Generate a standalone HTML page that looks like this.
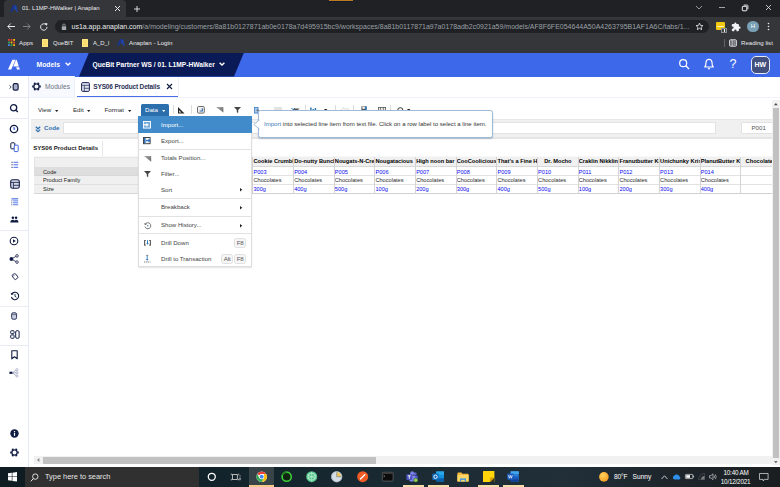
<!DOCTYPE html>
<html><head><meta charset="utf-8">
<style>
*{box-sizing:border-box;margin:0;padding:0}
html,body{width:780px;height:487px;overflow:hidden;background:#fff;font-family:"Liberation Sans",sans-serif;}
.abs{position:absolute}
#root{position:relative;width:780px;height:487px;overflow:hidden;background:#fff}
svg{position:absolute;overflow:visible}
/* chrome */
#tabbar{left:0;top:0;width:780px;height:17px;background:#202124}
#tab{left:4px;top:0;width:122px;height:17px;background:#35363a;border-radius:4px 4px 0 0}
#addr{left:0;top:17px;width:780px;height:18px;background:#35363a}
#pill{left:55px;top:19.6px;width:654px;height:13.9px;border-radius:7px;background:#202124}
#bm{left:0;top:35px;width:780px;height:17.5px;background:#35363a}
.ct{color:#e8eaed;font-size:6.4px;white-space:nowrap;line-height:8px}
/* app header */
#hdr{left:0;top:52.5px;width:780px;height:24px;background:#3e68ea}
#navy{left:79px;top:52.5px;width:165px;height:24px;background:#0a1a56;clip-path:polygon(10px 0,100% 0,155px 100%,0 100%)}
.ht{color:#fff;font-size:7px;font-weight:bold;white-space:nowrap;line-height:9px}
/* tabs row */
#tabs{left:0;top:76.5px;width:780px;height:21.4px;background:#fff;border-bottom:1.5px solid #f0f2fb}
#side{left:0;top:76px;width:28.5px;height:391px;background:#fff;border-right:1px solid #e4e8f7}
.ss{left:0;width:28px;height:1px;background:#e9ecf5}
.tt{font-size:6.6px;white-space:nowrap;line-height:8px;font-weight:bold}
/* toolbar */
.tb{font-size:6.15px;color:#2b2b2b;white-space:nowrap;line-height:8px}
.car{width:0;height:0;border-left:1.6px solid transparent;border-right:1.6px solid transparent;border-top:1.9px solid #222;margin-left:0.4px}
/* grid */
.g{font-size:5.6px;white-space:nowrap;line-height:8.7px;overflow:hidden}
.rh{left:34px;width:218.5px;border-bottom:1px solid #e0e0e0;padding-left:9px;color:#222}
#cols{position:absolute;left:0;top:0;width:772px;height:200px;overflow:hidden}
.col{top:156.5px;width:40.66px;height:37px;border-left:1px solid #d4d4d4}
.col div{padding-left:0.1px;overflow:hidden;border-bottom:1px solid #e2e2e2;color:#0a0af0}
.col div.h{height:10.5px;line-height:8px;padding-top:0.5px;background:#f0f0f0;color:#000;font-weight:bold;border-bottom:1px solid #d8d8d8;font-size:5.66px}
.col div.r1{height:9px;line-height:9px;padding-top:0.7px}
.col div.r2{height:9px;line-height:8.4px;padding-top:0}
.col div.r3{height:8.5px;line-height:7.4px;padding-top:1px;border-bottom:1px solid #d0d0d0}
.col div.f{color:#2a2a2a}
/* menu */
#menu{left:137.8px;top:116px;width:114.2px;height:151px;background:#fff;border:1px solid #dedede;box-shadow:0 0.5px 1.2px rgba(0,0,0,.12)}
.mi{left:161px;font-size:6.1px;color:#444;white-space:nowrap;line-height:8px}
.ms{left:138.5px;width:113px;height:1px;background:#e2e2e2}
.key{height:10.2px;border:1px solid #e0e0e0;border-radius:2.5px;background:#f6f6f6;font-size:6.1px;line-height:8.4px;color:#555;text-align:center}
.sub{width:0;height:0;border-top:1.7px solid transparent;border-bottom:1.7px solid transparent;border-left:2.2px solid #222;left:240px}
/* taskbar */
#task{left:0;top:467px;width:780px;height:20px;background:linear-gradient(90deg,#12222a 25%,#182830 45%,#212f39 72%,#1e262c 85%,#1a1e21 100%)}
.tk{color:#fff;font-size:6.1px;white-space:nowrap;line-height:8px}
</style></head><body><div id="root">

<!-- ===== Chrome ===== -->
<div id="tabbar" class="abs"></div>
<div id="tab" class="abs"></div>
<svg style="left:10.1px;top:5.1px" width="8.2" height="6.7" viewBox="8 59.7 11.9 9.8"><path d="M8 69.5H11.3L15.4 59.7H12.4Z" fill="#17348f"/><path d="M15.9 59.7H16.7L18.85 66.4H13.3Z" fill="#1d44b8"/><path d="M16.2 67.3H19.15L19.85 69.5H16.95Z" fill="#1d44b8"/></svg>
<div class="abs ct" style="left:22px;top:4px;font-size:6.05px">01. L1MP-HWalker | Anaplan</div>
<svg style="left:114px;top:5px" width="7" height="7" viewBox="0 0 7 7"><path d="M1 1L6 6M6 1L1 6" stroke="#e8eaed" stroke-width="1" fill="none"/></svg>
<svg style="left:133px;top:4.5px" width="8" height="8" viewBox="0 0 8 8"><path d="M4 1V7M1 4H7" stroke="#e8eaed" stroke-width="0.9" fill="none"/></svg>
<svg style="left:695px;top:5px" width="8" height="5" viewBox="0 0 8 5"><path d="M1 1L4 4L7 1" stroke="#ccc" stroke-width="0.7" fill="none"/></svg>
<svg style="left:718px;top:5px" width="8" height="5" viewBox="0 0 8 5"><path d="M1 2.5H7" stroke="#ddd" stroke-width="0.7"/></svg>
<svg style="left:741px;top:4px" width="8" height="8" viewBox="0 0 8 8"><rect x="1.3" y="2.3" width="4.5" height="4.5" rx="0.7" stroke="#f1f1f1" stroke-width="1" fill="none"/><path d="M2.7 1.1H6.3Q6.9 1.1 6.9 1.7V5.3" stroke="#f1f1f1" stroke-width="0.9" fill="none"/></svg>
<svg style="left:765px;top:4.1px" width="7" height="7" viewBox="0 0 7 7"><path d="M1 1L6 6M6 1L1 6" stroke="#eee" stroke-width="0.8" fill="none"/></svg>

<div class="abs" style="left:328.5px;top:0;width:24.5px;height:1.7px;background:#0c1730"></div><div class="abs" style="left:328.5px;top:0;width:24.5px;height:1px;background:#c47a1c"></div>
<div id="addr" class="abs"></div>
<svg style="left:6px;top:22px" width="10" height="9" viewBox="0 0 10 9"><path d="M9 4.5H2M4.8 1.5L1.8 4.5L4.8 7.5" stroke="#e8eaed" stroke-width="1" fill="none"/></svg>
<svg style="left:22px;top:22px" width="10" height="9" viewBox="0 0 10 9"><path d="M1 4.5H8M5.2 1.5L8.2 4.5L5.2 7.5" stroke="#7d8085" stroke-width="1" fill="none"/></svg>
<svg style="left:39px;top:21.5px" width="10" height="10" viewBox="0 0 10 10"><path d="M8 5A3.2 3.2 0 1 1 6.9 2.6" stroke="#e8eaed" stroke-width="1" fill="none"/><path d="M5.6 1L8.4 1.2L8 4Z" fill="#e8eaed"/></svg>
<div id="pill" class="abs"></div>
<svg style="left:61px;top:23px" width="6" height="8" viewBox="0 0 6 8"><rect x="0.8" y="3.3" width="4.4" height="3.7" rx="0.6" fill="#a4a9ae"/><path d="M1.8 3.5V2.2A1.2 1.2 0 0 1 4.2 2.2V3.5" stroke="#a4a9ae" stroke-width="0.8" fill="none"/></svg>
<div class="abs ct" style="left:71.5px;top:22.5px;font-size:7px">us1a.app.anaplan.com<span style="color:#9aa0a6">/a/modeling/customers/8a81b0127871ab0e0178a7d495915bc9/workspaces/8a81b0117871a97a0178adb2c0921a59/models/AF8F6FE054644A50A4263795B1AF1A6C/tabs/1...</span></div>
<svg style="left:695px;top:21.8px" width="9" height="9" viewBox="0 0 24 24"><path d="M12 3l2.7 6 6.5.6-4.9 4.3 1.5 6.4L12 16.9 6.2 20.3l1.5-6.4L2.8 9.6l6.5-.6z" stroke="#e8eaed" stroke-width="2.2" fill="none" stroke-linejoin="round"/></svg>
<div class="abs" style="left:716px;top:22.3px;width:8.5px;height:8.2px;background:#f2c811;border-radius:1px"></div>
<div class="abs" style="left:717px;top:25.6px;width:6.5px;height:1.2px;background:#fff3b0"></div>
<div class="abs" style="left:721.4px;top:27.6px;width:5.3px;height:5.8px;background:#45474b;border:0.6px solid #8a8d91"></div><div class="abs" style="left:723.7px;top:28.8px;width:0.9px;height:3.4px;background:#f0f0f0"></div>
<svg style="left:731px;top:21.5px" width="10" height="10" viewBox="0 0 24 24"><path d="M20.5 11H19V7a2 2 0 0 0-2-2h-4V3.5a2.5 2.5 0 0 0-5 0V5H4a2 2 0 0 0-2 2v3.8h1.5a2.7 2.7 0 0 1 0 5.4H2V20a2 2 0 0 0 2 2h3.8v-1.5a2.7 2.7 0 0 1 5.4 0V22H17a2 2 0 0 0 2-2v-4h1.5a2.5 2.5 0 0 0 0-5z" fill="#f1f3f4"/></svg>
<div class="abs" style="left:747.2px;top:20.8px;width:11.4px;height:11.4px;border-radius:6px;background:#789fb3;color:#fff;font-size:6px;line-height:11.4px;text-align:center">H</div>
<svg style="left:767.2px;top:21.9px" width="3" height="9" viewBox="0 0 3 9"><circle cx="1.5" cy="1.5" r="0.8" fill="#e8eaed"/><circle cx="1.5" cy="4.5" r="0.8" fill="#e8eaed"/><circle cx="1.5" cy="7.5" r="0.8" fill="#e8eaed"/></svg>

<div id="bm" class="abs"></div>
<svg style="left:8px;top:39px" width="7" height="7" viewBox="0 0 7 7"><rect x="0" y="0" width="1.8" height="1.8" fill="#ea4335"/><rect x="2.6" y="0" width="1.8" height="1.8" fill="#ea4335"/><rect x="5.2" y="0" width="1.8" height="1.8" fill="#fbbc04"/><rect x="0" y="2.6" width="1.8" height="1.8" fill="#34a853"/><rect x="2.6" y="2.6" width="1.8" height="1.8" fill="#fbbc04"/><rect x="5.2" y="2.6" width="1.8" height="1.8" fill="#ea4335"/><rect x="0" y="5.2" width="1.8" height="1.8" fill="#4285f4"/><rect x="2.6" y="5.2" width="1.8" height="1.8" fill="#34a853"/><rect x="5.2" y="5.2" width="1.8" height="1.8" fill="#fbbc04"/></svg>
<div class="abs ct" style="left:19px;top:39px;font-size:6.2px">Apps</div>
<div class="abs" style="left:41.8px;top:39px;width:6.4px;height:7.8px;background:#f8dc72;border:0.8px solid #ffe97e;border-radius:0.6px"></div>
<div class="abs ct" style="left:53px;top:39px;font-size:5.9px">QueBIT</div>
<div class="abs" style="left:81.8px;top:39px;width:6.4px;height:7.8px;background:#f8dc72;border:0.8px solid #ffe97e;border-radius:0.6px"></div>
<div class="abs ct" style="left:93px;top:39px;font-size:5.9px">A_D_I</div>
<svg style="left:117px;top:39.3px" width="8" height="6.6" viewBox="8 59.7 11.9 9.8"><path d="M8 69.5H11.3L15.4 59.7H12.4Z" fill="#17348f"/><path d="M15.9 59.7H16.7L18.85 66.4H13.3Z" fill="#1d44b8"/><path d="M16.2 67.3H19.15L19.85 69.5H16.95Z" fill="#1d44b8"/></svg>
<div class="abs ct" style="left:129px;top:39px;font-size:6.2px">Anaplan - Login</div>
<div class="abs" style="left:724px;top:38.5px;width:0.6px;height:8.5px;background:#5f6368"></div>
<svg style="left:729px;top:38.5px" width="8" height="8" viewBox="0 0 8 8"><rect x="0.6" y="0.8" width="6.8" height="6.4" rx="0.8" stroke="#dadce0" stroke-width="1" fill="#5f6368"/><path d="M3.2 1V7" stroke="#dadce0" stroke-width="0.8"/><path d="M4.6 2.7H6.3M4.6 4H6.3M4.6 5.3H6.3" stroke="#dadce0" stroke-width="0.5"/></svg>
<div class="abs ct" style="left:741px;top:39px;font-size:6.1px">Reading list</div>

<!-- ===== App header ===== -->
<div id="hdr" class="abs"></div>
<div id="navy" class="abs"></div>
<svg style="left:0;top:0" width="30" height="80" viewBox="0 0 30 80"><path d="M8 69.5H11.3L15.4 59.7H12.4Z" fill="#fff"/><path d="M15.9 59.7H16.7L18.85 66.4H13.3Z" fill="#fff"/><path d="M16.2 67.3H19.15L19.85 69.5H16.95Z" fill="#fff"/></svg>
<div class="abs ht" style="left:36.5px;top:59.5px;font-size:6.8px">Models</div>
<svg style="left:65px;top:62px" width="6" height="4" viewBox="0 0 6 4"><path d="M0.6 0.7L3 3.1L5.4 0.7" stroke="#fff" stroke-width="1.35" fill="none"/></svg>
<div class="abs ht" style="left:92.5px;top:59.5px;font-size:6.65px">QueBit Partner WS / 01. L1MP-HWalker</div>
<svg style="left:219px;top:62px" width="6" height="4" viewBox="0 0 6 4"><path d="M0.6 0.7L3 3.1L5.4 0.7" stroke="#fff" stroke-width="1.35" fill="none"/></svg>
<svg style="left:678px;top:58px" width="12" height="12" viewBox="0 0 12 12"><circle cx="5.2" cy="5.2" r="3.5" stroke="#fff" stroke-width="1.2" fill="none"/><path d="M7.8 7.8L11 11" stroke="#fff" stroke-width="1.3"/></svg>
<svg style="left:703px;top:57.5px" width="12" height="12" viewBox="0 0 12 12"><path d="M1.7 9H10.3Q9 8 9 4.4A3 3 0 0 0 3 4.4Q3 8 1.7 9Z" stroke="#fff" stroke-width="1.2" fill="none" stroke-linejoin="round"/><path d="M4.9 10.7H7.1" stroke="#fff" stroke-width="1.2"/></svg>
<div class="abs" style="left:729px;top:57.5px;color:#fff;font-size:12.5px;line-height:13px;width:8px;text-align:center;margin-top:0.8px">?</div>
<div class="abs" style="left:751px;top:55.5px;width:18.5px;height:18px;border:1.2px solid #e8ecfa;border-radius:5px;background:#43507d;color:#fff;font-size:7px;font-weight:bold;line-height:16px;text-align:center">HW</div>

<!-- ===== Tabs row ===== -->
<div id="tabs" class="abs"></div>
<div id="side" class="abs"></div>
<div class="abs" style="left:28.5px;top:76px;width:46px;height:20.5px;background:#f8f9fe;border-right:1px solid #eceffa"></div>
<svg style="left:32.1px;top:81.8px" width="9" height="9" viewBox="0 0 9 9"><circle cx="4.5" cy="4.5" r="2.65" stroke="#111c44" stroke-width="1.30" fill="none"/><path d="M7.40 4.50L8.80 4.50M5.95 7.01L6.65 8.22M3.05 7.01L2.35 8.22M1.60 4.50L0.20 4.50M3.05 1.99L2.35 0.78M5.95 1.99L6.65 0.78" stroke="#111c44" stroke-width="1.8"/></svg>
<div class="abs tt" style="left:45px;top:83px;color:#6b7280;font-weight:normal">Modules</div>
<svg style="left:81px;top:81.5px" width="9" height="10" viewBox="0 0 9 10"><rect x="0.6" y="0.6" width="7.8" height="8.8" rx="1.2" stroke="#1b2450" stroke-width="1" fill="#dfe3f0"/><path d="M0.6 3.3H8.4M3.3 3.3V9.4M3.3 6.3H8.4" stroke="#1b2450" stroke-width="0.7"/></svg>
<div class="abs tt" style="left:93.3px;top:83px;color:#2a3156;font-size:6.5px;letter-spacing:-0.15px">SYS06 Product Details</div>
<svg style="left:165.5px;top:83px" width="7" height="7" viewBox="0 0 7 7"><path d="M1 1L6 6M6 1L1 6" stroke="#111c44" stroke-width="1.1" fill="none"/></svg>
<div class="abs" style="left:177.5px;top:77px;width:1px;height:19px;background:#eef0fa"></div>
<div class="abs" style="left:77px;top:95.8px;width:101px;height:1.5px;background:#4a6ee8"></div>

<!-- ===== Sidebar icons ===== -->
<div class="abs ss" style="top:96.5px"></div>
<div class="abs ss" style="top:118px"></div>
<div class="abs ss" style="top:230px"></div>
<div class="abs ss" style="top:305.5px"></div>
<div class="abs ss" style="top:344.5px"></div>
<!--sideicons-->
<!-- sidebar icons: centered at x=14.2 -->
<svg style="left:9.2px;top:83.2px" width="10" height="8" viewBox="0 0 10 8"><path d="M0.5 2.4L2.2 4L0.5 5.6" stroke="#111c44" stroke-width="0.8" fill="none"/><rect x="4.2" y="0.7" width="4.9" height="6.4" rx="1.4" stroke="#111c44" stroke-width="1.2" fill="#aab0c8"/></svg>
<svg style="left:9px;top:102.5px" width="11" height="11" viewBox="0 0 11 11"><circle cx="4.6" cy="4.8" r="3.1" stroke="#111c44" stroke-width="1.3" fill="none"/><path d="M7 7.2L8.8 9" stroke="#111c44" stroke-width="1.3"/></svg>
<svg style="left:9.2px;top:123.7px" width="10" height="10" viewBox="0 0 10 10"><circle cx="5" cy="5" r="3.7" stroke="#111c44" stroke-width="1.3" fill="none"/><path d="M5 3V5.1H6.2" stroke="#3f63e4" stroke-width="1.1" fill="none"/></svg>
<svg style="left:9.5px;top:141.5px" width="10" height="11" viewBox="0 0 10 11"><rect x="0.8" y="0.8" width="4" height="6" rx="0.8" stroke="#111c44" stroke-width="1" fill="#fff"/><rect x="4.2" y="3.2" width="4" height="6.4" rx="0.8" stroke="#3f63e4" stroke-width="1" fill="#fff"/></svg>
<svg style="left:10.8px;top:161px" width="7.6" height="7.6" viewBox="0 0 9 9"><path d="M0.5 1.5H2M0.5 4.5H2M0.5 7.5H2" stroke="#111c44" stroke-width="1"/><path d="M3 1.5H8.5M3 4.5H8.5M3 7.5H8.5" stroke="#3f63e4" stroke-width="1.1"/></svg>
<svg style="left:9.5px;top:178.5px" width="10" height="10" viewBox="0 0 10 10"><rect x="0.7" y="0.7" width="8.6" height="8.6" rx="1.8" stroke="#111c44" stroke-width="1.1" fill="#d5d9e8"/><path d="M0.7 3.4H9.3M3.4 3.4V9.3M3.4 6.3H9.3" stroke="#111c44" stroke-width="0.8"/></svg>
<svg style="left:10.8px;top:197.8px" width="7.6" height="7.6" viewBox="0 0 9 9"><path d="M0.5 1H8.5" stroke="#3f63e4" stroke-width="1.3"/><path d="M2.5 3.4H8.5M2.5 5.7H8.5M2.5 8H8.5" stroke="#3f63e4" stroke-width="1"/><path d="M0.5 3.4H1.5M0.5 5.7H1.5M0.5 8H1.5" stroke="#111c44" stroke-width="1"/></svg>
<svg style="left:10px;top:216px" width="8.8" height="7.2" viewBox="0 0 11 9"><circle cx="3.6" cy="2.3" r="1.6" fill="#111c44"/><circle cx="7.6" cy="2.3" r="1.6" fill="#111c44"/><path d="M0.4 8.2Q0.4 4.8 3.6 4.8Q5.6 4.8 5.6 6.2Q5.6 4.8 7.6 4.8Q10.6 4.8 10.6 8.2Z" fill="#111c44"/></svg>
<svg style="left:9.2px;top:235.8px" width="10" height="10" viewBox="0 0 10 10"><circle cx="5" cy="5" r="3.8" stroke="#111c44" stroke-width="1.1" fill="none"/><path d="M4 3.2L6.8 5L4 6.8Z" fill="#111c44"/></svg>
<svg style="left:9px;top:254px" width="11" height="10" viewBox="0 0 11 10"><circle cx="2.4" cy="5" r="1.9" fill="#111c44"/><circle cx="8" cy="1.9" r="1.3" stroke="#111c44" stroke-width="0.8" fill="#fff"/><circle cx="8" cy="8.1" r="1.3" stroke="#111c44" stroke-width="0.8" fill="#fff"/><path d="M3.8 4.2L6.8 2.5M3.8 5.8L6.8 7.5" stroke="#111c44" stroke-width="0.8"/></svg>
<svg style="left:10.5px;top:273.4px" width="7.6" height="7.6" viewBox="0 0 9 9"><path d="M1 3.2L3.2 1H5L8.2 4.2Q8.6 4.7 8.2 5.2L5.8 7.6Q5.3 8 4.8 7.6L1 3.8Z" stroke="#111c44" stroke-width="1" fill="none" transform="rotate(8 4.5 4.5)"/><circle cx="3.4" cy="3.2" r="0.6" fill="#111c44"/></svg>
<svg style="left:9.5px;top:291px" width="10" height="10" viewBox="0 0 10 10"><path d="M1.6 3.4A3.7 3.7 0 1 1 1.4 6" stroke="#111c44" stroke-width="1.1" fill="none"/><path d="M0.5 1.8L1.7 4L3.8 3Z" fill="#111c44"/><path d="M5 3V5.3L6.4 6.2" stroke="#111c44" stroke-width="0.9" fill="none"/></svg>
<svg style="left:11.3px;top:312px" width="6.2" height="8" viewBox="0 0 8 10"><rect x="0.8" y="0.8" width="6.4" height="8.4" rx="2" stroke="#111c44" stroke-width="1.1" fill="#c9cde0"/><path d="M0.8 2.8Q4 4 7.2 2.8" stroke="#111c44" stroke-width="0.7" fill="none"/></svg>
<svg style="left:9.5px;top:329.5px" width="10" height="9" viewBox="0 0 10 9"><rect x="0.7" y="0.7" width="3.4" height="3" rx="0.8" stroke="#111c44" stroke-width="1" fill="none"/><rect x="0.7" y="4.9" width="3.4" height="3.4" rx="0.8" stroke="#111c44" stroke-width="1" fill="none"/><rect x="5.7" y="0.7" width="3.4" height="7.6" rx="1.2" stroke="#111c44" stroke-width="1" fill="none"/></svg>
<svg style="left:10.7px;top:350px" width="7" height="10" viewBox="0 0 7 10"><path d="M0.8 0.8H6.2V8.8L3.5 6.8L0.8 8.8Z" stroke="#111c44" stroke-width="1.1" fill="none" stroke-linejoin="round"/></svg>
<svg style="left:8.8px;top:368px" width="11" height="10" viewBox="0 0 11 10"><path d="M0.4 4.8H3.6" stroke="#111c44" stroke-width="2.2"/><path d="M3.4 4.8L7.5 1.8M3.4 4.8H7.5M3.4 4.8L7.5 8" stroke="#8b93b5" stroke-width="0.7"/><circle cx="8" cy="1.7" r="1.1" stroke="#8b93b5" stroke-width="0.6" fill="#fff"/><circle cx="8" cy="4.8" r="1.1" stroke="#8b93b5" stroke-width="0.6" fill="#fff"/><circle cx="8" cy="8" r="1.1" stroke="#8b93b5" stroke-width="0.6" fill="#fff"/></svg>
<svg style="left:9.7px;top:429.2px" width="9" height="9" viewBox="0 0 9 9"><circle cx="4.5" cy="4.5" r="4.2" fill="#111c44"/><rect x="3.9" y="3.8" width="1.2" height="3" fill="#fff"/><rect x="3.9" y="2" width="1.2" height="1.1" fill="#fff"/></svg>
<svg style="left:9.7px;top:447.6px" width="9" height="9" viewBox="0 0 9 9"><circle cx="4.5" cy="4.5" r="2.65" stroke="#111c44" stroke-width="1.30" fill="none"/><path d="M7.40 4.50L8.80 4.50M5.95 7.01L6.65 8.22M3.05 7.01L2.35 8.22M1.60 4.50L0.20 4.50M3.05 1.99L2.35 0.78M5.95 1.99L6.65 0.78" stroke="#111c44" stroke-width="1.8"/></svg>
<!--/sideicons-->

<!-- ===== Toolbar ===== -->
<div class="abs tb" style="left:38px;top:106px">View</div><svg style="left:55.0px;top:109.6px" width="3.4" height="2.1" viewBox="0 0 3.4 2.1"><path d="M0 0H3.4L1.7 2.1Z" fill="#222"/></svg>
<div class="abs tb" style="left:73px;top:106px">Edit</div><svg style="left:86.8px;top:109.6px" width="3.4" height="2.1" viewBox="0 0 3.4 2.1"><path d="M0 0H3.4L1.7 2.1Z" fill="#222"/></svg>
<div class="abs tb" style="left:104.5px;top:106px">Format</div><svg style="left:127.7px;top:109.6px" width="3.4" height="2.1" viewBox="0 0 3.4 2.1"><path d="M0 0H3.4L1.7 2.1Z" fill="#222"/></svg>
<div class="abs" style="left:141.3px;top:104px;width:27.7px;height:12.5px;background:#2c6fad;border-radius:1.5px 1.5px 0 0"></div>
<div class="abs tb" style="left:145px;top:106px;color:#fff">Data</div><svg style="left:161.6px;top:109.6px" width="3.4" height="2.1" viewBox="0 0 3.4 2.1"><path d="M0 0H3.4L1.7 2.1Z" fill="#fff"/></svg>

<!--tbicons-->
<!-- toolbar icons -->
<div class="abs" style="left:173px;top:105px;width:0.8px;height:9px;background:#dcdcdc"></div>
<svg style="left:178.3px;top:107px" width="6.5" height="6.5" viewBox="0 0 6.5 6.5"><path d="M0 0L6.5 6.5H0Z" fill="#222"/><path d="M1.2 3.2L3.4 5.4H1.2Z" fill="#fff"/></svg>
<div class="abs" style="left:191.3px;top:105px;width:0.8px;height:9px;background:#dcdcdc"></div>
<svg style="left:197.2px;top:106.3px" width="8" height="7.6" viewBox="0 0 8 7.6"><rect x="0.5" y="0.5" width="6.8" height="6.6" rx="1.1" stroke="#6a6a6a" stroke-width="1" fill="#f0f0f0"/><path d="M5.3 2.2V5H2.6" stroke="#2f6fb5" stroke-width="1.2" fill="none"/></svg>
<svg style="left:215.7px;top:107.3px" width="7.4" height="5.6" viewBox="0 0 7.4 5.6"><defs><linearGradient id="tg" x1="0" y1="0" x2="1" y2="1"><stop offset="0" stop-color="#aaa"/><stop offset="1" stop-color="#666"/></linearGradient></defs><path d="M0 0H7.4V5.6Z" fill="url(#tg)"/></svg>
<svg style="left:234.4px;top:107.2px" width="7" height="6" viewBox="0 0 7 6"><path d="M0 0H7L4.2 3V6L2.8 5.2V3Z" fill="#444"/></svg>
<svg style="left:254px;top:106.8px" width="5" height="6.5" viewBox="0 0 5 6.5"><rect x="0.4" y="0.4" width="3.6" height="5.7" stroke="#3b7ec4" stroke-width="0.8" fill="#a9c8e8"/><path d="M2.5 3.2H5" stroke="#555" stroke-width="0.9"/></svg>
<!-- icons mostly hidden behind tooltip: only their tops show (y 105..110.5) -->
<svg style="left:273.5px;top:107px" width="8" height="6" viewBox="0 0 8 6" opacity="0.45"><path d="M1 0V6M3 0V6M5 0V6M7 0V6" stroke="#888" stroke-width="1"/></svg>
<svg style="left:291px;top:106.5px" width="9" height="7" viewBox="0 0 9 7"><path d="M0.5 1L4 4.5M4 1L0.5 4.5" stroke="#2f7ab8" stroke-width="1"/><path d="M2.5 1.4H8.5L6.5 3.5H3.5" fill="#555"/></svg>
<div class="abs" style="left:304.5px;top:105px;width:0.8px;height:9px;background:#dcdcdc"></div>
<svg style="left:310px;top:106.5px" width="8" height="7" viewBox="0 0 8 7"><path d="M0.9 0.5V7M3.2 2V7M5.4 1V7M7.4 3V7" stroke="#2f7ab8" stroke-width="1.5"/></svg>
<svg style="left:324.1px;top:109.4px" width="3.4" height="2.1" viewBox="0 0 3.4 2.1"><path d="M0 0H3.4L1.7 2.1Z" fill="#222"/></svg>
<div class="abs" style="left:334.8px;top:105px;width:0.8px;height:9px;background:#dcdcdc"></div>
<svg style="left:341px;top:107px" width="8" height="6" viewBox="0 0 8 6" opacity="0.5"><path d="M0.5 2.6L2.8 0.6V1.8H7.5V5.5H6.5V3.4H2.8V4.6Z" fill="none" stroke="#999" stroke-width="0.6"/></svg>
<div class="abs" style="left:353.2px;top:105px;width:0.8px;height:9px;background:#dcdcdc"></div>
<svg style="left:361px;top:106.3px" width="6" height="7" viewBox="0 0 6 7"><rect x="0.4" y="0.4" width="5.2" height="6.2" fill="#555"/><rect x="1.4" y="0.8" width="2.4" height="2" fill="#fff"/><rect x="4" y="0.4" width="1.6" height="6.2" fill="#2f7ab8"/></svg>
<svg style="left:378px;top:107.4px" width="8" height="6" viewBox="0 0 8 6"><rect x="0.4" y="0.4" width="7.2" height="5" stroke="#555" stroke-width="0.8" fill="#eee"/><path d="M2.6 0.4V5.4M5.4 0.4V5.4" stroke="#555" stroke-width="0.7"/></svg>
<div class="abs" style="left:390.2px;top:105px;width:0.8px;height:9px;background:#dcdcdc"></div>
<svg style="left:396.5px;top:107.2px" width="7" height="7" viewBox="0 0 7 7"><circle cx="3.3" cy="3.3" r="2.6" stroke="#333" stroke-width="1" fill="none"/></svg>
<svg style="left:406.6px;top:109.4px" width="3.4" height="2.1" viewBox="0 0 3.4 2.1"><path d="M0 0H3.4L1.7 2.1Z" fill="#222"/></svg>
<!--/tbicons-->
<!-- ===== Filter bar ===== -->
<div class="abs" style="left:31px;top:118.6px;width:740.5px;height:20.3px;background:#f0f0f0;border-top:1.4px solid #e7e7e7;border-bottom:2px solid #e5e5e5"></div>
<svg style="left:35.3px;top:125.6px" width="6" height="7" viewBox="0 0 6 7"><path d="M0.8 0.8L3 2.8L5.2 0.8M0.8 3.6L3 5.6L5.2 3.6" stroke="#2d6fb0" stroke-width="1.25" fill="none"/></svg>
<div class="abs tb" style="left:44px;top:123.8px;color:#2d6fb0;font-weight:bold">Code</div>
<div class="abs" style="left:63px;top:122px;width:653px;height:12px;background:#fff;border:1px solid #e2e2e2;border-radius:1px"></div>
<div class="abs" style="left:740.5px;top:122px;width:34px;height:12px;background:#fff;border:1px solid #e2e2e2;border-radius:1px"></div>
<div class="abs tb" style="left:751.5px;top:123.8px;color:#555">P001</div>

<!-- ===== Grid ===== -->
<div class="abs tb" style="left:33.2px;top:144.1px;font-weight:bold;color:#222;font-size:6.05px">SYS06 Product Details</div>
<div class="abs" style="left:102px;top:141px;width:1px;height:15.5px;background:#e7e7e7"></div>
<div class="abs" style="left:34px;top:156.5px;width:218.5px;height:10.5px;background:#f0f0f0;border-top:1px solid #e6e6e6;border-left:1px solid #e2e2e2"></div>
<div class="abs g rh" style="top:167px;height:9px;line-height:9px;padding-top:0.7px;background:#dedede;border-bottom-color:#d8d8d8">Code</div>
<div class="abs g rh" style="top:176px;height:9px;line-height:8.4px;padding-top:0;background:#f0f0f0">Product Family</div>
<div class="abs g rh" style="top:185px;height:8.5px;line-height:7.4px;padding-top:1px;background:#f0f0f0;border-bottom-color:#d8d8d8">Size</div>
<div class="abs" style="left:34px;top:156px;width:738px;height:1px;background:#f8f8f8"></div>
<div id="cols"><div class="abs g col" style="left:252.40px"><div class="h">Cookie Crumble</div><div class="r1">P003</div><div class="r2 f">Chocolates</div><div class="r3">300g</div></div>
<div class="abs g col" style="left:293.06px"><div class="h">Do-nutty Bunch</div><div class="r1">P004</div><div class="r2 f">Chocolates</div><div class="r3">400g</div></div>
<div class="abs g col" style="left:333.72px"><div class="h">Nougats-N-Cream</div><div class="r1">P005</div><div class="r2 f">Chocolates</div><div class="r3">500g</div></div>
<div class="abs g col" style="left:374.38px"><div class="h">Nougatacious</div><div class="r1">P006</div><div class="r2 f">Chocolates</div><div class="r3">100g</div></div>
<div class="abs g col" style="left:415.04px"><div class="h">High noon bar</div><div class="r1">P007</div><div class="r2 f">Chocolates</div><div class="r3">200g</div></div>
<div class="abs g col" style="left:455.70px"><div class="h">CooCoolicious</div><div class="r1">P008</div><div class="r2 f">Chocolates</div><div class="r3">300g</div></div>
<div class="abs g col" style="left:496.36px"><div class="h">That's a Fine Ho</div><div class="r1">P009</div><div class="r2 f">Chocolates</div><div class="r3">400g</div></div>
<div class="abs g col" style="left:537.02px"><div class="h" style="text-align:center;padding-left:0">Dr. Mocho</div><div class="r1">P010</div><div class="r2 f">Chocolates</div><div class="r3">500g</div></div>
<div class="abs g col" style="left:577.68px"><div class="h">Craklin Nikklin</div><div class="r1">P011</div><div class="r2 f">Chocolates</div><div class="r3">100g</div></div>
<div class="abs g col" style="left:618.34px"><div class="h">Franutbutter Kr</div><div class="r1">P012</div><div class="r2 f">Chocolates</div><div class="r3">200g</div></div>
<div class="abs g col" style="left:659.00px"><div class="h">Unichunky Krisp</div><div class="r1">P013</div><div class="r2 f">Chocolates</div><div class="r3">300g</div></div>
<div class="abs g col" style="left:699.66px"><div class="h">PlanutButter Kr</div><div class="r1">P014</div><div class="r2 f">Chocolates</div><div class="r3">400g</div></div>
<div class="abs g col" style="left:740.32px"><div class="h" style="padding-left:4.3px">Chocolate Ch</div><div class="r1"></div><div class="r2 f"></div><div class="r3"></div></div>
</div><!--/cols-->

<!-- ===== Scrollbars ===== -->
<div class="abs" style="left:771.8px;top:99.5px;width:8.2px;height:365px;background:#f1f1f1"></div>
<div class="abs" style="left:772.5px;top:108px;width:6.5px;height:349.6px;background:#c1c1c1"></div>
<svg style="left:773.8px;top:461.2px" width="3.7" height="2.3" viewBox="0 0 5 3"><path d="M0 0L2.5 3L5 0Z" fill="#6a6a6a"/></svg>
<div class="abs" style="left:776.6px;top:467px;width:0.7px;height:20px;background:#5a6064"></div>
<svg style="left:773.9px;top:102.6px" width="3.7" height="2.3" viewBox="0 0 5 3"><path d="M0 3L2.5 0L5 3Z" fill="#484848"/></svg>
<div class="abs" style="left:34px;top:456.2px;width:738px;height:8.3px;background:#f1f1f1"></div>
<div class="abs" style="left:42.7px;top:456.6px;width:333.5px;height:7.4px;background:#c1c1c1"></div>
<svg style="left:37px;top:458.4px" width="2.4" height="4" viewBox="0 0 3 5"><path d="M3 0L0 2.5L3 5Z" fill="#8a8a8a"/></svg>

<!-- ===== Tooltip ===== -->
<div id="tip" class="abs" style="left:258px;top:110px;width:234.5px;height:27.5px;background:#fff;border:1px solid #9dbad6;border-radius:2.5px;box-shadow:0 1px 1.5px rgba(60,100,150,.35)"></div>
<svg style="left:253px;top:119.5px" width="6.5" height="9" viewBox="0 0 6.5 9"><path d="M6.5 0L0.8 4.5L6.5 9" fill="#fff" stroke="#9dbad6" stroke-width="0.9"/></svg>
<div class="abs tb" style="left:264px;top:119.8px;color:#333;font-size:6.05px"><span style="color:#3b7ab8">Import</span> into selected line item from text file. Click on a row label to select a line item.</div>

<!-- ===== Menu ===== -->
<div id="menu" class="abs"></div>
<div class="abs" style="left:138.3px;top:116.2px;width:113.4px;height:16.6px;background:#428bca"></div>
<div class="abs mi" style="top:120.5px;color:#fff">Import...</div>
<div class="abs mi" style="top:136.8px">Export...</div>
<div class="abs ms" style="top:149px"></div>
<div class="abs mi" style="top:154.3px">Totals Position...</div>
<div class="abs mi" style="top:170.2px">Filter...</div>
<div class="abs mi" style="top:185.8px">Sort</div><svg style="left:240px;top:188.1px" width="2.3" height="3.4" viewBox="0 0 2.3 3.4"><path d="M0 0L2.3 1.7L0 3.4Z" fill="#222"/></svg>
<div class="abs ms" style="top:198px"></div>
<div class="abs mi" style="top:203.4px">Breakback</div><svg style="left:240px;top:205.7px" width="2.3" height="3.4" viewBox="0 0 2.3 3.4"><path d="M0 0L2.3 1.7L0 3.4Z" fill="#222"/></svg>
<div class="abs ms" style="top:215.7px"></div>
<div class="abs mi" style="top:221.3px">Show History...</div><svg style="left:240px;top:223.6px" width="2.3" height="3.4" viewBox="0 0 2.3 3.4"><path d="M0 0L2.3 1.7L0 3.4Z" fill="#222"/></svg>
<div class="abs ms" style="top:233.3px"></div>
<div class="abs mi" style="top:238.9px">Drill Down</div>
<div class="abs key" style="left:234.2px;top:237.8px;width:12px">F8</div>
<div class="abs mi" style="top:255px">Drill to Transaction</div>
<div class="abs key" style="left:221.2px;top:253.6px;width:12px">Alt</div>
<div class="abs key" style="left:234.2px;top:253.6px;width:12px">F8</div>

<!--menuicons-->
<!-- menu icons -->
<svg style="left:143.3px;top:120.9px" width="8" height="7.6" viewBox="0 0 8 7.6"><rect x="0.5" y="0.5" width="7" height="6.6" fill="rgba(255,255,255,0.28)" stroke="#fff" stroke-width="0.9"/><path d="M0.6 3.8H4" stroke="#fff" stroke-width="1.3"/><path d="M3.4 1.9L5.8 3.8L3.4 5.7Z" fill="#fff"/></svg>
<svg style="left:143.3px;top:136.9px" width="8" height="7.2" viewBox="0 0 8 7.2"><rect x="0.5" y="0.5" width="6.6" height="6.2" fill="#eef2f7" stroke="#444" stroke-width="1"/><rect x="0.9" y="0.9" width="1.7" height="5.4" fill="#2f6fb5"/><path d="M3 3.6H6.2" stroke="#2f6fb5" stroke-width="1.3"/><path d="M5.5 1.7L8 3.6L5.5 5.5Z" fill="#2f6fb5"/></svg>
<svg style="left:144px;top:155.7px" width="7.2" height="5.7" viewBox="0 0 7.2 5.7"><path d="M0 0H7.2V5.7Z" fill="url(#tg)"/></svg>
<svg style="left:144px;top:171px" width="7" height="6.2" viewBox="0 0 7 6.2"><path d="M0 0H7L4.2 3.1V6.2L2.8 5.3V3.1Z" fill="#444"/></svg>
<svg style="left:143.8px;top:221.7px" width="7.4" height="7.4" viewBox="0 0 7.4 7.4"><path d="M1.2 2.2A3 3 0 1 1 0.9 4.6" stroke="#555" stroke-width="0.8" fill="none"/><path d="M0.3 0.9L0.9 3L2.9 2.2Z" fill="#555"/><circle cx="3.8" cy="3.7" r="0.7" fill="#2f7ab8"/></svg>
<svg style="left:144px;top:240.2px" width="7" height="5.6" viewBox="0 0 7 5.6"><path d="M1.8 0.5H0.6V5.1H1.8M5.2 0.5H6.4V5.1H5.2" stroke="#5a5a5a" stroke-width="1.1" fill="none"/><path d="M3.5 0.2V3.6" stroke="#2f7ab8" stroke-width="1"/><path d="M2.2 3L3.5 4.8L4.8 3Z" fill="#2f7ab8"/></svg>
<svg style="left:144.3px;top:255px" width="6.4" height="7.6" viewBox="0 0 6.4 7.6"><path d="M2.2 0.4H4.2" stroke="#555" stroke-width="0.7"/><path d="M3.2 0.4V4.6" stroke="#2f7ab8" stroke-width="0.9"/><path d="M1.9 4L3.2 5.8L4.5 4Z" fill="#2f7ab8"/><path d="M0 7H6.4" stroke="#666" stroke-width="0.8" stroke-dasharray="1.4 0.6"/></svg>
<!--/menuicons-->
<!-- ===== Taskbar ===== -->
<div id="task" class="abs"></div>
<div class="abs" style="left:0;top:467px;width:24.5px;height:20px;background:#0f1c22"></div>
<div class="abs" style="left:24.5px;top:467px;width:174.5px;height:20px;background:#303030"></div>
<div class="abs tk" style="left:45px;top:472.7px;color:#e6e6e6;font-size:7.4px">Type here to search</div>

<!--taskicons-->
<!-- taskbar icons -->
<svg style="left:8px;top:472px" width="9" height="9.6" viewBox="0 0 9 9.6"><path d="M0 1.3L3.8 0.8V4.5H0ZM4.4 0.7L9 0V4.5H4.4ZM0 5.1H3.8V8.8L0 8.3ZM4.4 5.1H9V9.6L4.4 8.9Z" fill="#fff"/></svg>
<svg style="left:29.5px;top:472.5px" width="9" height="9" viewBox="0 0 9 9"><circle cx="5.3" cy="3.6" r="2.7" stroke="#eee" stroke-width="0.9" fill="none"/><path d="M3.4 5.6L0.8 8.3" stroke="#eee" stroke-width="1"/></svg>
<svg style="left:206.5px;top:472px" width="9.6" height="9.6" viewBox="0 0 9.6 9.6"><circle cx="4.8" cy="4.8" r="3.5" stroke="#fff" stroke-width="1.3" fill="none"/></svg>
<svg style="left:230.5px;top:472.8px" width="10" height="8" viewBox="0 0 10 8"><rect x="1.5" y="1.6" width="4.8" height="4.8" stroke="#ddd" stroke-width="0.8" fill="none"/><path d="M0.3 0.6V2.2M0.3 5.8V7.4M7.6 0.6V2.2M7.6 5.8V7.4" stroke="#ddd" stroke-width="0.7"/><path d="M9 2.4V3.4M9 4.6V7.2" stroke="#ddd" stroke-width="1"/></svg>
<div class="abs" style="left:249.2px;top:467px;width:25px;height:20px;background:#394449"></div>
<div class="abs" style="left:249.2px;top:485.4px;width:25px;height:1.6px;background:#f6c98a"></div>
<svg style="left:256px;top:470.8px" width="11.4" height="11.4" viewBox="0 0 48 48"><circle cx="24" cy="24" r="22" fill="#fff"/><path d="M24 2A22 22 0 0 1 43.05 13H24A11 11 0 0 0 14.47 18.5L4.95 13A22 22 0 0 1 24 2Z" fill="#ea4335"/><path d="M43.05 13A22 22 0 0 1 24 46L33.53 29.5A11 11 0 0 0 33.53 18.5L35 13Z" fill="#fbbc05"/><path d="M24 46A22 22 0 0 1 4.95 13L14.47 29.5A11 11 0 0 0 24 35L29 35L33.53 29.5Z" fill="#34a853"/><circle cx="24" cy="24" r="10.2" fill="#fff"/><circle cx="24" cy="24" r="8" fill="#4285f4"/></svg>
<svg style="left:281px;top:470.8px" width="11.4" height="11.4" viewBox="0 0 11.4 11.4"><circle cx="5.7" cy="5.7" r="4.6" stroke="#3ecf3a" stroke-width="1.6" fill="#10240f"/><path d="M5.7 1.1A4.6 4.6 0 0 0 1.5 3.8" stroke="#1f7d22" stroke-width="1.6" fill="none"/></svg>
<svg style="left:306.2px;top:470.8px" width="11.4" height="11.4" viewBox="0 0 11.4 11.4"><circle cx="5.7" cy="5.7" r="5.5" fill="#55c58a"/><circle cx="5.7" cy="5.7" r="3.6" stroke="#c8f3dc" stroke-width="0.8" fill="none"/><path d="M5.7 1V10.4M1.2 4L10.2 7.4M1.2 7.4L10.2 4" stroke="#c8f3dc" stroke-width="0.6"/></svg>
<svg style="left:331.3px;top:470.8px" width="11.4" height="11.4" viewBox="0 0 11.4 11.4"><circle cx="5.7" cy="5.7" r="5.5" fill="#d4dde6"/><path d="M5.7 5.7V1.2A4.5 4.5 0 0 1 10.2 5.7Z" fill="#f0c75a"/><path d="M5.7 1.2V5.7H10.2" stroke="#6a7680" stroke-width="0.6" fill="none"/><circle cx="5.7" cy="5.7" r="5.2" stroke="#9aa6b2" stroke-width="0.6" fill="none"/></svg>
<svg style="left:356.8px;top:470.8px" width="11.4" height="11.4" viewBox="0 0 11.4 11.4"><circle cx="5.7" cy="5.7" r="5.5" fill="#ef5b25"/><path d="M3.2 8.3L8.2 3.2" stroke="#fff" stroke-width="1.3"/><path d="M3 8.6L4.4 8.1L3.4 7.1Z" fill="#fff"/></svg>
<svg style="left:381.7px;top:471.5px" width="11.4" height="9.4" viewBox="0 0 11.4 9.4"><rect x="0.3" y="0.3" width="10.8" height="8.8" rx="0.6" fill="#0c0c0c" stroke="#777" stroke-width="0.6"/><rect x="0.6" y="0.6" width="10.2" height="1.4" fill="#3a3a3a"/><path d="M1.6 3.4L2.8 4.2L1.6 5" stroke="#ccc" stroke-width="0.5" fill="none"/></svg>
<div class="abs" style="left:402.5px;top:485.4px;width:21px;height:1.6px;background:#f6dca8"></div>
<svg style="left:406.3px;top:470.8px" width="12.4" height="11.6" viewBox="0 0 12.4 11.6"><circle cx="9.2" cy="2.8" r="1.5" fill="#5b62d0"/><circle cx="6.2" cy="2.2" r="2" fill="#7b83eb"/><rect x="7.6" y="4.6" width="4.2" height="4.6" rx="1.2" fill="#5059c9"/><rect x="3.2" y="4.4" width="6.2" height="6" rx="1.4" fill="#7b83eb"/><rect x="0.4" y="3.2" width="5.8" height="5.8" rx="0.8" fill="#4b53bc"/><path d="M1.8 4.8H4.8M3.3 4.8V7.8" stroke="#fff" stroke-width="0.9"/><circle cx="9.8" cy="9.2" r="2.1" fill="#8fd14f" stroke="#1d2124" stroke-width="0.4"/></svg>
<div class="abs" style="left:427.5px;top:485.4px;width:21px;height:1.6px;background:#f6dca8"></div>
<svg style="left:432.3px;top:471px" width="12.4" height="11" viewBox="0 0 12.4 11"><rect x="4.2" y="0.4" width="7.8" height="10.2" rx="0.8" fill="#1490df"/><rect x="4.2" y="0.4" width="7.8" height="3.4" fill="#28a8ea"/><rect x="4.2" y="7.2" width="7.8" height="3.4" rx="0.8" fill="#0a5ea8"/><rect x="0.3" y="2.6" width="6.4" height="6.4" rx="0.8" fill="#0f6cbd"/><circle cx="3.5" cy="5.8" r="1.7" stroke="#fff" stroke-width="0.9" fill="none"/></svg>
<svg style="left:457px;top:471.5px" width="12" height="10" viewBox="0 0 12 10"><path d="M0.4 1.4Q0.4 0.6 1.2 0.6H4.4L5.4 1.8H10.8Q11.6 1.8 11.6 2.6V9.4H0.4Z" fill="#f5b93e"/><rect x="0.4" y="3" width="11.2" height="6.4" rx="0.5" fill="#fcd667"/><rect x="3" y="6.4" width="6" height="3" fill="#3a95e0"/><rect x="4.2" y="7.8" width="3.6" height="1.6" fill="#fcd667"/></svg>
<div class="abs" style="left:478px;top:485.4px;width:21.2px;height:1.6px;background:#f6dca8"></div>
<svg style="left:482.8px;top:471px" width="11.4" height="11" viewBox="0 0 11.4 11"><rect x="0" y="0" width="11.4" height="11" rx="0.6" fill="#ffd60a"/><path d="M11.4 6.5V11H6.8Z" fill="#3a3320"/><path d="M6.8 11L11.4 6.5H7.4Q6.8 6.5 6.8 7.1Z" fill="#d9a400"/></svg>
<div class="abs" style="left:503.3px;top:485.4px;width:21px;height:1.6px;background:#f6dca8"></div>
<svg style="left:507.3px;top:471px" width="12" height="11" viewBox="0 0 12 11"><rect x="3.6" y="0.3" width="8.2" height="10.4" rx="0.8" fill="#2b7cd3"/><rect x="3.6" y="0.3" width="8.2" height="2.7" fill="#41a5ee"/><rect x="3.6" y="5.6" width="8.2" height="2.6" fill="#185abd"/><rect x="3.6" y="8.2" width="8.2" height="2.5" rx="0.8" fill="#103f91"/><rect x="0.2" y="2.4" width="6.4" height="6.4" rx="0.7" fill="#185abd"/><path d="M1.5 4L2.4 7.2L3.4 4.4L4.4 7.2L5.3 4" stroke="#fff" stroke-width="0.7" fill="none"/></svg>
<svg style="left:599px;top:471.8px" width="9.8" height="9.8" viewBox="0 0 9.8 9.8"><defs><radialGradient id="sun" cx="0.4" cy="0.35" r="0.7"><stop offset="0" stop-color="#ffd45e"/><stop offset="1" stop-color="#f79a1f"/></radialGradient></defs><circle cx="4.9" cy="4.9" r="4.8" fill="url(#sun)"/></svg>
<div class="abs tk" style="left:614px;top:473.4px;font-size:6.6px;letter-spacing:-0.15px">80°F</div><div class="abs tk" style="left:632.6px;top:473.4px;font-size:6.6px">Sunny</div>
<svg style="left:661px;top:474.5px" width="7" height="4.5" viewBox="0 0 7 4.5"><path d="M0.5 4L3.5 0.8L6.5 4" stroke="#eee" stroke-width="0.8" fill="none"/></svg>
<svg style="left:671.5px;top:473.8px" width="9" height="5.5" viewBox="0 0 9 5.5"><path d="M2.2 5.5A2 2 0 0 1 2.2 1.7A2.8 2.8 0 0 1 7.2 2.3A1.7 1.7 0 0 1 7.2 5.5Z" fill="#2d8fea"/></svg>
<svg style="left:684.5px;top:474.3px" width="9" height="5" viewBox="0 0 9 5"><rect x="0.4" y="0.4" width="7.4" height="4.2" rx="0.6" stroke="#ddd" stroke-width="0.7" fill="none"/><rect x="1.2" y="1.2" width="3.8" height="2.6" fill="#fff"/><rect x="8" y="1.6" width="0.8" height="1.8" fill="#ddd"/></svg>
<svg style="left:697.5px;top:473.2px" width="7" height="7" viewBox="0 0 7 7" opacity="0.6"><path d="M6.5 6.5V0.5A6 6 0 0 0 0.5 6.5Z" fill="none" stroke="#888" stroke-width="0.5"/><path d="M6.5 6.5V3A3.5 3.5 0 0 0 3 6.5Z" fill="#bbb"/></svg>
<svg style="left:708.5px;top:473px" width="9" height="7.5" viewBox="0 0 9 7.5"><path d="M0.5 2.6H2L4 0.8V6.7L2 4.9H0.5Z" stroke="#ddd" stroke-width="0.6" fill="none"/><path d="M5.2 2.4Q6 3.75 5.2 5.1M6.4 1.4Q7.9 3.75 6.4 6.1" stroke="#ddd" stroke-width="0.6" fill="none"/></svg>
<div class="abs tk" style="left:723.5px;top:468.7px;font-size:6.3px;letter-spacing:-0.2px">10:40 AM</div>
<div class="abs tk" style="left:720.8px;top:477.7px;font-size:6.3px;letter-spacing:-0.2px">10/12/2021</div>
<svg style="left:758.8px;top:473.3px" width="9.6" height="8.6" viewBox="0 0 9.6 8.6"><path d="M0.5 0.5H9.1V6.4H5.6L4.2 8L4.2 6.4H0.5Z" stroke="#e8e8e8" stroke-width="0.7" fill="none"/></svg>
<!--/taskicons-->
</div></body></html>
